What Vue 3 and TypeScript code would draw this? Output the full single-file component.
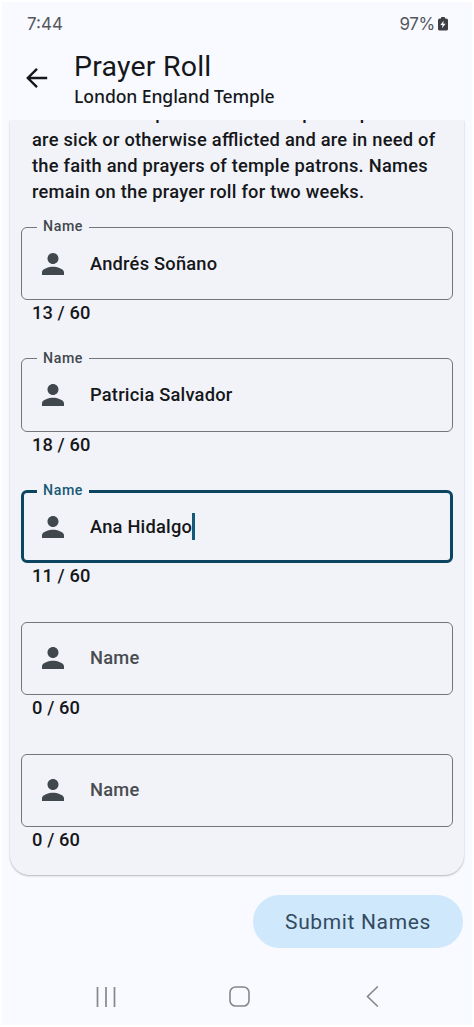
<script setup lang="ts">
interface NameField {
  value: string
  count: number
  focused?: boolean
}

const fields: NameField[] = [
  { value: 'Andrés Soñano', count: 13 },
  { value: 'Patricia Salvador', count: 18 },
  { value: 'Ana Hidalgo', count: 11, focused: true },
  { value: '', count: 0 },
  { value: '', count: 0 },
]
const intro = [
  'Names on temple roll can be of parish priests who',
  'are sick or otherwise afflicted and are in need of',
  'the faith and prayers of temple patrons. Names',
  'remain on the prayer roll for two weeks.',
]
</script>

<template>
  <div class="screen">
    <header class="status">
      <span class="clock">7:44</span>
      <span class="battery">
        <span class="percent">97%</span>
        <svg width="10" height="14" viewBox="0 0 10 14">
          <path d="M3 .8Q3 0 3.8 0h2.4Q7 0 7 .8v.7h1.3Q10 1.500 10 3.200v8.800Q10 13.500 8.300 13.500H1.700Q0 13.500 0 12V3.200Q0 1.500 1.700 1.500H3Z" fill="#3c3e43" />
          <path d="M5.700 3.700 2.300 7.900h2.200L4 11.200l3.600-4.400H5.300Z" fill="#f8faff" />
        </svg>
      </span>
    </header>

    <div class="appbar">
      <svg class="back" width="22" height="20" viewBox="0 0 22 20" fill="none" stroke="#15171a" stroke-width="2.400">
        <path d="M21.200 10H2M11 .8 1.800 10 11 19.200" />
      </svg>
      <div>
        <h1>Prayer Roll</h1>
        <h2>London England Temple</h2>
      </div>
    </div>

    <main class="viewport">
      <section class="card">
        <p class="intro">
          <span v-for="(line, i) in intro" :key="i" class="line" :class="{ first: i === 0 }">{{ line }}</span>
        </p>
        <div v-for="(field, i) in fields" :key="i" class="field" :class="{ focused: field.focused }">
          <fieldset class="box">
            <legend v-if="field.value">Name</legend>
          </fieldset>
          <div class="content">
            <svg class="person" width="22" height="22" viewBox="4 4 16 16">
              <path d="M12 12c2.210 0 4-1.790 4-4s-1.790-4-4-4-4 1.790-4 4 1.790 4 4 4zm0 2c-2.670 0-8 1.340-8 4v2h16v-2c0-2.660-5.330-4-8-4z" fill="#41484d" />
            </svg>
            <span v-if="field.value">{{ field.value }}</span>
            <span v-else class="placeholder">Name</span>
            <i v-if="field.focused" class="caret"></i>
          </div>
          <div class="counter">{{ field.count }} / 60</div>
        </div>
      </section>
    </main>

    <div class="actions">
      <button class="submit">Submit Names</button>
    </div>

    <nav class="navbar">
      <svg width="21" height="20" viewBox="0 0 21 20" stroke="#85878c" stroke-width="1.700">
        <path d="M1.500 0v20M10 0v20M18.500 0v20" />
      </svg>
      <svg width="21" height="21" viewBox="0 0 21 21" fill="none" stroke="#85878c" stroke-width="1.600">
        <rect x="1" y="1" width="19" height="19" rx="5.500" />
      </svg>
      <svg width="13" height="21" viewBox="0 0 13 21" fill="none" stroke="#85878c" stroke-width="1.600">
        <path d="M11.800.5 1.500 10.500l10.300 10" />
      </svg>
    </nav>
  </div>
</template>

<style>
body {
  margin: 0;
  background: #fff;
}
</style>

<style scoped>
.screen {
  box-sizing: border-box;
  width: 470px;
  height: 1023px;
  margin: 2px 2px 0;
  overflow: hidden;
  display: flex;
  flex-direction: column;
  background: #f8faff;
  color: #15171a;
  font-family: Roboto, 'Liberation Sans', sans-serif;
}
.status {
  flex: none;
  height: 43px;
  padding: 0 24px 0 25px;
  display: flex;
  justify-content: space-between;
  align-items: center;
  color: #55575c;
  font: 400 17px/44px Inter, sans-serif;
}
.battery {
  display: flex;
  align-items: center;
  gap: 3px;
}
.percent {
  letter-spacing: -0.3px;
}
.appbar {
  flex: none;
  height: 75px;
  display: flex;
  padding-left: 24px;
}
.back {
  margin: 23px 26px 0 0;
}
h1 {
  margin: 4px 0 0;
  font-size: 28.500px;
  line-height: 36px;
  font-weight: 400;
  letter-spacing: 0.200px;
}
h2 {
  margin: 0;
  font: 500 17.600px/22px 'Noto Sans', sans-serif;
  letter-spacing: -0.100px;
}
.viewport {
  flex: none;
  height: 763px;
  padding: 0 8px;
  overflow: hidden;
}
.card {
  box-sizing: border-box;
  height: 755px;
  padding: 0 11px;
  border-radius: 0 0 20px 20px;
  background: #f2f3f8;
  box-shadow: 0 1px 2px rgba(0, 0, 0, 0.28);
}
.intro {
  margin: 0;
  padding: 0 11px;
  height: 107px;
  overflow: hidden;
  font-size: 18.300px;
  font-weight: 480;
  line-height: 26.400px;
  letter-spacing: 0.240px;
  font-feature-settings: 'liga' 1;
}
.line {
  display: block;
  white-space: nowrap;
}
.first {
  margin-top: -19.900px;
  word-spacing: 0.500px;
}
.field {
  height: 131.650px;
  position: relative;
  font-size: 18.300px;
  font-weight: 480;
  letter-spacing: 0.220px;
}
.box {
  position: absolute;
  inset: -10px 0 auto;
  box-sizing: border-box;
  height: 83px;
  margin: 0;
  padding: 0 0 0 15px;
  border: 1px solid #72767b;
  border-radius: 6px;
}
.box:not(:has(legend)) {
  top: 0;
  height: 73px;
}
.box legend {
  padding: 0 6px;
  height: 20px;
  line-height: 19px;
  font-size: 14.200px;
  letter-spacing: 0.600px;
  color: #41484d;
}
.focused .box {
  top: -9px;
  border: 3px solid #0b4560;
  height: 82px;
  padding-left: 13px;
}
.focused legend {
  color: #165a77;
}
.content {
  height: 72px;
  margin-bottom: 1px;
  padding-left: 21px;
  display: flex;
  align-items: center;
}
.person {
  margin: 1px 26px 0 0;
}
.placeholder {
  color: #484c51;
}
.caret {
  width: 3px;
  height: 27px;
  background: #165a77;
}
.counter {
  padding-left: 11px;
  line-height: 26px;
  letter-spacing: 0.100px;
}
.actions {
  flex: none;
  height: 63px;
  padding: 12px 9px 0 0;
  display: flex;
  justify-content: flex-end;
  align-items: flex-start;
}
.submit {
  width: 210px;
  height: 53px;
  padding: 0;
  border: 0;
  border-radius: 27px;
  background: #cfe8fc;
  color: #334b5f;
  font: 400 21px/54px Roboto, sans-serif;
  letter-spacing: 0.640px;
}
.navbar {
  flex: 1;
  padding-top: 10px;
  display: grid;
  grid-template-columns: 208px 58px 208px;
  justify-items: center;
  align-items: center;
}
</style>
